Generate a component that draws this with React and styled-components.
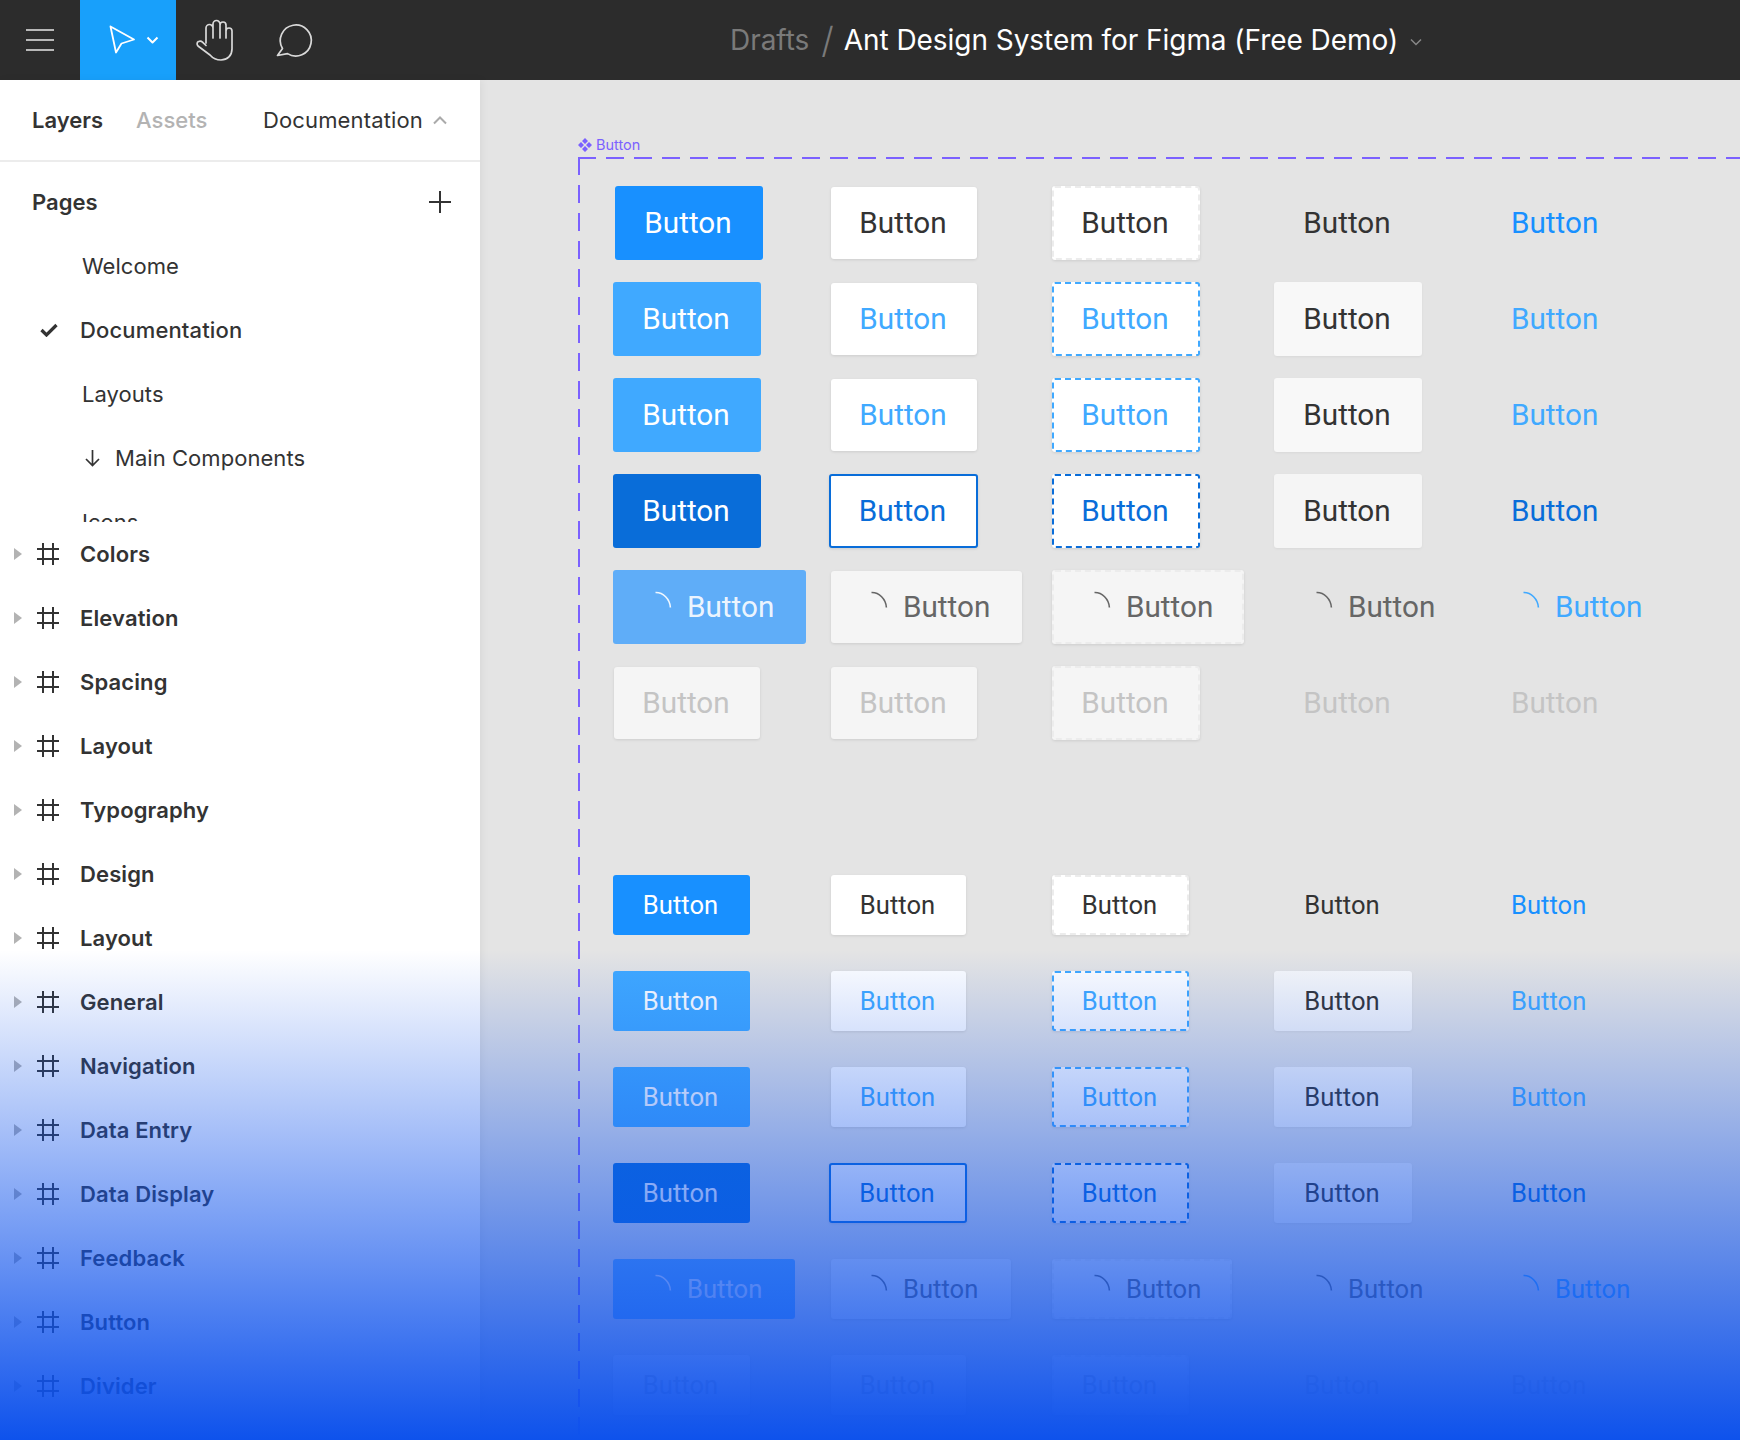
import React from 'react'
import styled, { createGlobalStyle } from 'styled-components'

const GlobalStyle = createGlobalStyle`
  html, body { margin: 0; padding: 0; }
  body { font-family: Inter, "Liberation Sans", sans-serif; background: #e4e4e4; }
`

const Page = styled.div`
  position: relative;
  width: 1740px;
  height: 1440px;
  overflow: hidden;
  display: flex;
  flex-direction: column;
`

const Fade = styled.div`
  position: absolute;
  left: 0;
  right: 0;
  top: 950px;
  bottom: 0;
  z-index: 2;
  pointer-events: none;
  background: linear-gradient(180deg, rgba(14, 82, 236, 0) 0%, rgba(14, 82, 236, 1) 100%);
`

/* top bar */
const TopBar = styled.header`
  flex: none;
  height: 80px;
  background: #2c2c2c;
  display: flex;
  align-items: center;
  color: #fff;
`

const Tool = styled.div`
  box-sizing: border-box;
  width: ${p => p.$w}px;
  height: 80px;
  padding-left: ${p => (p.$active ? 20 : 0)}px;
  display: flex;
  align-items: center;
  justify-content: center;
  background: ${p => (p.$active ? '#18a0fb' : 'transparent')};
`

const Breadcrumb = styled.div`
  margin-left: 395px;
  display: flex;
  align-items: center;
  font-size: 28px;
  letter-spacing: -0.05px;
  white-space: nowrap;
`

const Muted = styled.span`
  color: #7a7a7a;
`

const Slash = styled.span`
  color: #7a7a7a;
  font-size: 36px;
  font-weight: 300;
  margin: 0 10px 0 12px;
`

const Caret = styled.svg`
  margin-left: 12px;
  margin-top: 4px;
`

/* sidebar */
const Body = styled.div`
  flex: 1;
  display: flex;
  min-height: 0;
`

const Sidebar = styled.aside`
  flex: none;
  width: 480px;
  background: #fff;
  box-shadow: 2px 0 8px rgba(0, 0, 0, 0.05);
  z-index: 1;
  color: #333;
`

const Tabs = styled.div`
  height: 80px;
  padding: 0 32px;
  display: flex;
  align-items: center;
  border-bottom: 2px solid #ececec;
  font-size: 22px;
`

const Tab = styled.span`
  font-weight: ${p => (p.$on ? 600 : 500)};
  color: ${p => (p.$on ? '#333' : '#b3b3b3')};
  margin-right: 33px;
`

const PageSelect = styled.div`
  margin-left: auto;
  margin-right: 1px;
  display: flex;
  align-items: center;
  gap: 10px;
  letter-spacing: 0.15px;
`

const PagesHead = styled.div`
  box-sizing: border-box;
  height: 72px;
  padding: 8px 29px 0 32px;
  display: flex;
  align-items: center;
  justify-content: space-between;
  font-size: 22px;
  font-weight: 600;
`

const PageList = styled.div`
  height: 288px;
  overflow: hidden;
`

const PageItem = styled.div`
  height: 64px;
  display: flex;
  align-items: center;
  padding-left: ${p => p.$left}px;
  font-size: 22px;
  font-weight: ${p => (p.$current ? 500 : 400)};
  letter-spacing: ${p => (p.$current ? 0.15 : 0.05)}px;
`

const CheckIcon = styled.svg`
  margin-right: 22px;
`

const ArrowIcon = styled.svg`
  margin-right: 14px;
`

const LayerItem = styled.div`
  height: 64px;
  display: flex;
  align-items: center;
  padding-left: 14px;
  font-size: 22px;
  font-weight: 600;
  letter-spacing: 0.12px;
`

const Hash = styled.svg`
  margin: 0 21px 0 15px;
`

/* canvas */
const Canvas = styled.main`
  flex: 1;
  position: relative;
  background: #e4e4e4;
  padding: 77px 0 0 98px;
  overflow: hidden;
`

const FrameLabel = styled.div`
  height: 0;
  display: flex;
  align-items: center;
  gap: 4px;
  transform: translateY(-12px);
  color: #7b61ff;
  font-size: 14.5px;
  line-height: 20px;
`

const Frame = styled.section`
  padding: 18px 0 0 35px;
  height: 1400px;
  background:
    repeating-linear-gradient(90deg, #7b61ff 0 18px, transparent 18px 28px) left top / 100% 2px no-repeat,
    repeating-linear-gradient(180deg, #7b61ff 0 18px, transparent 18px 28px) left top / 2px 100% no-repeat;
`

const Grid = styled.div`
  display: grid;
  grid-template-columns: 218px 221px 222px 237px 200px;
  grid-auto-rows: 96px;
  align-items: center;
  margin-bottom: ${p => p.$after || 0}px;
`

const fills = {
  primary: {
    normal: ['#1890ff', '#fff'],
    hover: ['#40a9ff', '#fff'],
    active: ['#096dd9', '#fff'],
    loading: ['#5fadf8', 'rgba(255,255,255,.9)'],
  },
  default: {
    normal: ['#fff', '#333'],
    hover: ['#fff', '#40a9ff'],
    active: ['#fff', '#096dd9'],
    loading: ['#f5f5f5', '#666'],
  },
  dashed: {
    normal: ['#fff', '#333'],
    hover: ['#fff', '#40a9ff'],
    active: ['#fff', '#096dd9'],
    loading: ['#f5f5f5', '#666'],
  },
  text: {
    normal: ['transparent', '#333'],
    hover: ['#f8f8f8', '#333'],
    active: ['#f5f5f5', '#333'],
    loading: ['transparent', '#666'],
  },
  link: {
    normal: ['transparent', '#1890ff'],
    hover: ['transparent', '#40a9ff'],
    active: ['transparent', '#096dd9'],
    loading: ['transparent', '#40a9ff'],
  },
}

const disabledFill = {
  primary: ['#f5f5f5', '#c4c4c4'],
  default: ['#f5f5f5', '#c4c4c4'],
  dashed: ['#f5f5f5', '#c4c4c4'],
  text: ['transparent', '#c4c4c4'],
  link: ['transparent', '#c4c4c4'],
}

const pick = (kind, state) => (state === 'disabled' ? disabledFill[kind] : fills[kind][state])

const borderFor = ({ $kind, $state }) => {
  if ($kind === 'dashed') {
    if ($state === 'hover') return '2px dashed #40a9ff'
    if ($state === 'active') return '2px dashed #096dd9'
    return '2px dashed #ececec'
  }
  if ($kind === 'default' && $state === 'active') return '2px solid #096dd9'
  return 'none'
}

const loadPad = { primary: 41, default: 39, dashed: 39, text: 41, link: 11 }

const shadowFor = ({ $kind, $state }) => {
  if ($kind === 'link') return 'none'
  if ($kind === 'text') return $state === 'hover' || $state === 'active' ? '0 1px 3px rgba(0,0,0,.05)' : 'none'
  if ($kind === 'primary') return $state === 'disabled' ? '0 1px 3px rgba(0,0,0,.1)' : 'none'
  return '0 1px 3px rgba(0,0,0,.1)'
}

const Btn = styled.div`
  box-sizing: border-box;
  justify-self: start;
  display: flex;
  align-items: center;
  justify-content: ${p => (p.$state === 'loading' ? 'flex-start' : 'center')};
  gap: 15px;
  width: ${p => (p.$kind === 'link' ? 'auto' : `${p.$w}px`)};
  height: ${p => p.$h}px;
  margin-left: ${p => p.$shift || 0}px;
  padding-left: ${p => (p.$state === 'loading' ? loadPad[p.$kind] : 0)}px;
  padding-right: ${p => (p.$state === 'loading' || p.$kind === 'link' ? 0 : 2)}px;
  padding-bottom: ${p => p.$lift}px;
  font-family: Roboto, "Liberation Sans", sans-serif;
  font-size: ${p => p.$fs}px;
  border-radius: 3px;
  background: ${p => pick(p.$kind, p.$state)[0]};
  color: ${p => pick(p.$kind, p.$state)[1]};
  border: ${borderFor};
  box-shadow: ${shadowFor};
`

const SpinIcon = styled.svg`
  flex: none;
  margin-bottom: 12px;
`

const Spinner = () => (
  <SpinIcon width="18" height="18" viewBox="0 0 18 18" fill="none" stroke="currentColor" strokeWidth="1.6">
    <path d="M1.5 1.5C9 1.2 16 8 16.4 16.5" />
  </SpinIcon>
)

const kinds = ['primary', 'default', 'dashed', 'text', 'link']
const states = ['normal', 'hover', 'hover', 'active', 'loading', 'disabled']

const large = {
  h: 74, fs: 29.7, lift: 2, inset: 2,
  widths: { primary: 148, default: 146, dashed: 148, text: 148, link: 0 },
  load: { primary: 193, default: 191, dashed: 192, text: 192, link: 0 },
}
const small = {
  h: 60, fs: 25.6, lift: 0, inset: 0,
  widths: { primary: 137, default: 135, dashed: 137, text: 138, link: 0 },
  load: { primary: 182, default: 180, dashed: 180, text: 180, link: 0 },
}

const ButtonGrid = ({ size, after, firstShift }) => (
  <Grid $after={after}>
    {states.map((state, r) =>
      kinds.map(kind => {
        const current = state === 'active' && kind === 'default'
        const plainDisabled = state === 'disabled' && kind === 'primary'
        let shift = 0
        let h = size.h
        let w = state === 'loading' ? size.load[kind] : size.widths[kind]
        if (r === 0 && kind === 'primary') shift = firstShift
        if (current) {
          shift = -2
          w += 3
        }
        if (kind === 'default' && !current) h -= size.inset
        if (plainDisabled) {
          shift = size.inset / 2
          w -= size.inset
          h -= size.inset
        }
        return (
          <Btn
            key={kind + r}
            $kind={kind}
            $state={state}
            $h={h}
            $fs={size.fs}
            $lift={size.lift}
            $shift={shift}
            $w={w}
          >
            {state === 'loading' && <Spinner />}
            Button
          </Btn>
        )
      })
    )}
  </Grid>
)

const pages = [
  { name: 'Welcome', left: 82 },
  { name: 'Documentation', left: 40, check: true },
  { name: 'Layouts', left: 82 },
  { name: 'Main Components', left: 84, arrow: true },
  { name: 'Icons', left: 82 },
]

const layers = ['Colors', 'Elevation', 'Spacing', 'Layout', 'Typography', 'Design', 'Layout', 'General', 'Navigation', 'Data Entry', 'Data Display', 'Feedback', 'Button', 'Divider']

export default function App() {
  return (
    <Page>
      <GlobalStyle />
      <TopBar>
        <Tool $w={80}>
          <svg width="28" height="22" viewBox="0 0 28 22" stroke="#e6e6e6" strokeWidth="1.6">
            <path d="M0 1h28M0 11h28M0 21h28" />
          </svg>
        </Tool>
        <Tool $w={96} $active>
          <svg width="62" height="30" viewBox="0 0 62 30" fill="none" stroke="#fff" strokeWidth="1.8" strokeLinejoin="round">
            <path d="M3.5 1.5L27 14.5 14.5 18.5 9 27.5Z" />
            <path d="M40.5 12.5L45.5 17.5 50.5 12.5" strokeWidth="2" />
          </svg>
        </Tool>
        <Tool $w={78}>
          <svg width="40" height="44" viewBox="0 0 40 44" fill="none" stroke="#d9d9d9" strokeWidth="1.7" strokeLinecap="round" strokeLinejoin="round">
            <path d="M11 25V10a3.500 3.500 0 0 1 7 0V20M18 10V6a3.500 3.500 0 0 1 7 0V20M25 7a3 3 0 0 1 6 0V20M31 13a3 3 0 0 1 6 0V31c0 6.500-4.500 11-11 11-5 0-8-1.500-11-5L3 28c-1.500-1.800-1-3.600.4-4.400 1.300-.8 3-.6 4.100.5L11 27.500" />
          </svg>
        </Tool>
        <Tool $w={81}>
          <svg width="40" height="40" viewBox="0 0 40 40" fill="none" stroke="#d9d9d9" strokeWidth="1.7" strokeLinejoin="round">
            <path d="M7.500 28.500L2.500 35.500 12.500 33.600A15.500 15.500 0 1 0 7.500 28.500Z" />
          </svg>
        </Tool>
        <Breadcrumb>
          <Muted>Drafts</Muted>
          <Slash>/</Slash>
          <span>Ant Design System for Figma (Free Demo)</span>
          <Caret width="12" height="8" viewBox="0 0 12 8" fill="none" stroke="#888" strokeWidth="1.5">
            <path d="M1 1.500L6 6.500 11 1.500" />
          </Caret>
        </Breadcrumb>
      </TopBar>
      <Body>
        <Sidebar>
          <Tabs>
            <Tab $on>Layers</Tab>
            <Tab>Assets</Tab>
            <PageSelect>
              Documentation
              <svg width="14" height="9" viewBox="0 0 14 9" fill="none" stroke="#aaa" strokeWidth="2">
                <path d="M1 7.500L7 1.500 13 7.500" />
              </svg>
            </PageSelect>
          </Tabs>
          <PagesHead>
            Pages
            <svg width="22" height="22" viewBox="0 0 22 22" stroke="#333" strokeWidth="2">
              <path d="M11 0v22M0 11h22" />
            </svg>
          </PagesHead>
          <PageList>
            {pages.map(p => (
              <PageItem key={p.name} $left={p.left} $current={p.check}>
                {p.check && (
                  <CheckIcon width="18" height="14" viewBox="0 0 18 14" fill="none" stroke="#333" strokeWidth="3.200">
                    <path d="M1.500 7L6.500 12 16.500 2" />
                  </CheckIcon>
                )}
                {p.arrow && (
                  <ArrowIcon width="17" height="18" viewBox="0 0 17 18" fill="none" stroke="#333" strokeWidth="1.700">
                    <path d="M8.500 1v15M2 10l6.500 6.500L15 10" />
                  </ArrowIcon>
                )}
                {p.name}
              </PageItem>
            ))}
          </PageList>
          {layers.map((name, i) => (
            <LayerItem key={name + i}>
              <svg width="8" height="12" viewBox="0 0 8 12" fill="#b3b3b3">
                <path d="M0 0l8 6-8 6z" />
              </svg>
              <Hash width="22" height="22" viewBox="0 0 22 22" stroke="#333" strokeWidth="2">
                <path d="M6 0v22M16 0v22M0 6h22M0 16h22" />
              </Hash>
              {name}
            </LayerItem>
          ))}
        </Sidebar>
        <Canvas>
          <FrameLabel>
            <svg width="14" height="14" viewBox="0 0 14 14" fill="#7b61ff">
              <path d="M7 0l3 3-3 3-3-3zM3 4l3 3-3 3-3-3zM11 4l3 3-3 3-3-3zM7 8l3 3-3 3-3-3z" />
            </svg>
            Button
          </FrameLabel>
          <Frame>
            <ButtonGrid size={large} after={105.500} firstShift={2} />
            <ButtonGrid size={small} firstShift={0} />
          </Frame>
        </Canvas>
      </Body>
      <Fade />
    </Page>
  )
}
